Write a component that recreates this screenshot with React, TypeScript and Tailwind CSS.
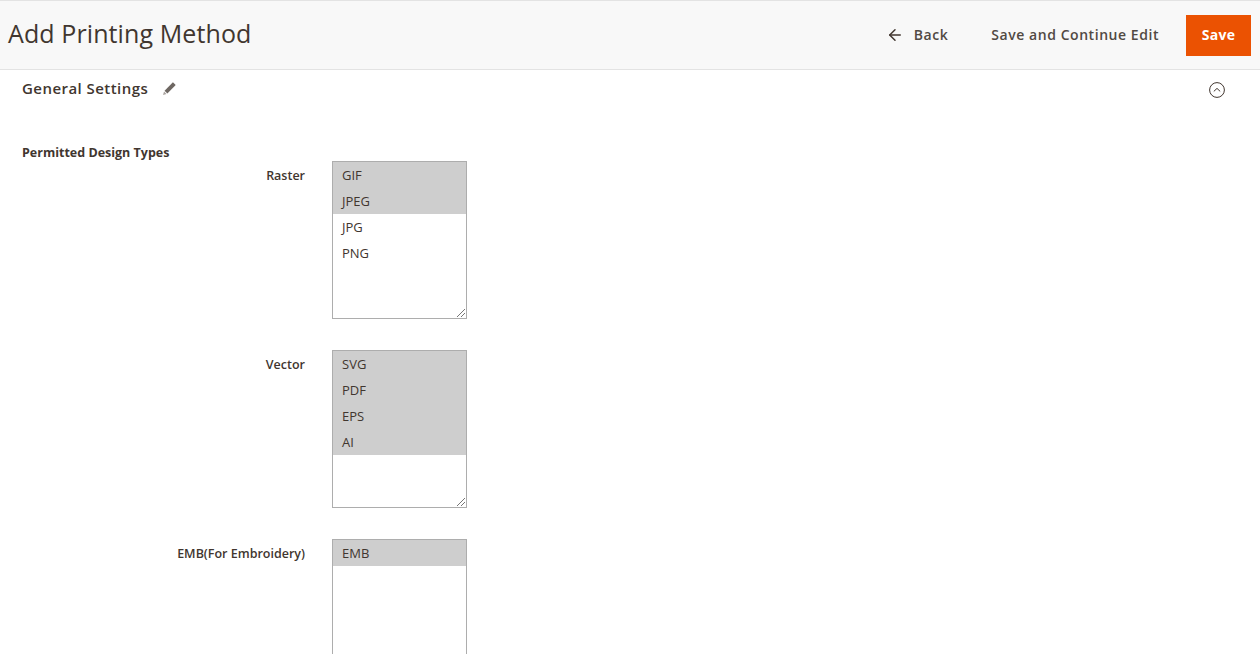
import { ArrowLeft } from 'lucide-react';

const font = { fontFamily: '"Open Sans", sans-serif' };

const groups = [
  { label: 'Raster', options: ['GIF', 'JPEG', 'JPG', 'PNG'], selected: ['GIF', 'JPEG'] },
  { label: 'Vector', options: ['SVG', 'PDF', 'EPS', 'AI'], selected: ['SVG', 'PDF', 'EPS', 'AI'] },
  { label: 'EMB(For Embroidery)', options: ['EMB'], selected: ['EMB'] },
];

function Grip() {
  return (
    <svg width="10" height="10" viewBox="0 0 10 10" className="absolute right-0 bottom-0">
      <path d="M1 9 L9 1 M5 9 L9 5" stroke="#777" strokeWidth="1" fill="none" />
    </svg>
  );
}

function MultiSelect({ options, selected }: { options: string[]; selected: string[] }) {
  return (
    <div className="relative w-[135px] h-[158px] shrink-0 border border-[#adadad] bg-white">
      {options.map((o) => (
        <div
          key={o}
          className={`h-[26px] pl-[9px] text-[13px] leading-[26px] text-[#41362f] ${selected.includes(o) ? 'bg-[#cecece]' : ''}`}
        >
          {o}
        </div>
      ))}
      <Grip />
    </div>
  );
}

export default function App() {
  return (
    <div className="h-[654px] overflow-hidden bg-white text-[#41362f]" style={font}>
      {/* Header */}
      <header className="h-[70px] flex items-center justify-between bg-[#f8f8f8] border-y border-[#e3e3e3] pl-2 pr-[9px]">
        <h1 className="text-[25px] font-normal tracking-[0.1px] leading-[30px] mb-[4px] text-[#41362f]">Add Printing Method</h1>
        <div className="flex items-center">
          <button className="flex items-center text-sm font-semibold tracking-[0.55px] text-[#514943] mr-[43px]">
            <ArrowLeft size={18} strokeWidth={2} className="mr-[10px] text-[#41362f]" />
            Back
          </button>
          <button className="text-sm font-semibold tracking-[0.55px] text-[#514943] mr-[27px]">
            Save and Continue Edit
          </button>
          <button className="w-[65px] h-[41px] bg-[#eb5202] text-sm font-bold tracking-[0.3px] text-white">
            Save
          </button>
        </div>
      </header>

      <main className="pl-[22px] pr-[35px]">
        {/* Section title */}
        <div className="flex items-start justify-between h-[73px] pt-[7px]">
          <div className="flex items-center h-[22px]">
            <span className="text-[15px] font-semibold tracking-[0.45px] text-[#41362f]">General Settings</span>
            <svg width="15" height="15" viewBox="0 0 14 14" className="ml-[14px]">
              <path d="M10.2 1.2 L12.8 3.8 L5 11.6 L2.4 9 Z" fill="#6e6762" />
              <path d="M1.9 9.8 L4.2 12.1 L1 13 Z" fill="#a8a29e" />
            </svg>
          </div>
          <svg width="16" height="16" viewBox="0 0 16 16" className="mt-[5px]">
            <circle cx="8" cy="8" r="7.4" fill="none" stroke="#41362f" strokeWidth="1" />
            <path d="M4.8 9.4 L8 6.4 L11.2 9.4" fill="none" stroke="#41362f" strokeWidth="1" />
          </svg>
        </div>

        <div className="text-[12.5px] font-bold leading-[20px] text-[#41362f] h-[18px]">Permitted Design Types</div>

        {/* Fields */}
        <div className="flex flex-col gap-[31px]">
          {groups.map((g) => (
            <div key={g.label} className="flex">
              <label className="w-[283px] pt-[5px] text-right text-[12.5px] font-semibold leading-[20px] text-[#41362f]">
                {g.label}
              </label>
              <div className="ml-[27px]">
                <MultiSelect options={g.options} selected={g.selected} />
              </div>
            </div>
          ))}
        </div>
      </main>
    </div>
  );
}
